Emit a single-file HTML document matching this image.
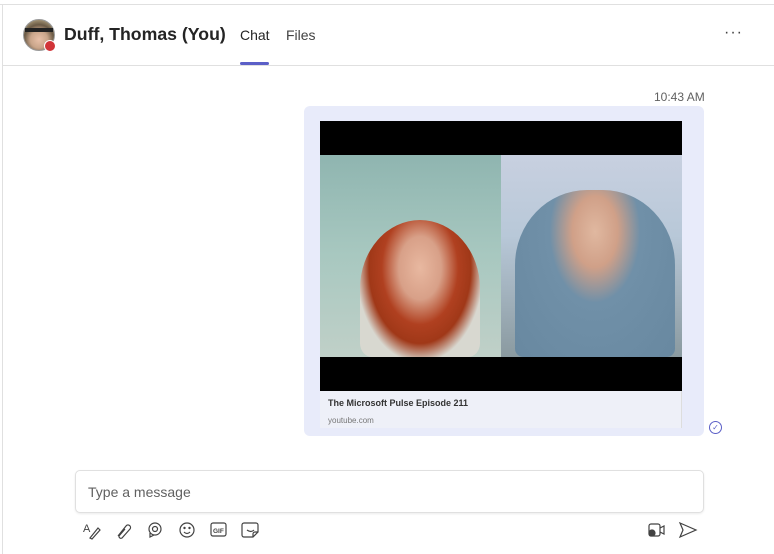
<!DOCTYPE html>
<html><head><style>
*{margin:0;padding:0;box-sizing:border-box}
body{width:774px;height:554px;overflow:hidden;background:#fff;font-family:"Liberation Sans",sans-serif;position:relative}
.abs{position:absolute}
</style></head><body>
<div class="abs" style="left:0;top:4px;width:774px;height:1px;background:#e0e0e0"></div>
<div class="abs" style="left:2px;top:4px;width:1px;height:550px;background:#e0e0e0"></div>
<div class="abs" style="left:3px;top:65px;width:771px;height:1px;background:#e0e0e0"></div>
<!-- avatar -->
<div class="abs" style="left:23px;top:19px;width:32px;height:32px;border-radius:50%;background:radial-gradient(circle at 50% 65%,#e8c0a8 0,#c9a58a 35%,#6a5a45 60%,#d9c9a0 100%);border:1px solid #999"></div>
<div class="abs" style="left:25px;top:28px;width:28px;height:4px;background:#222"></div>
<div class="abs" style="left:44px;top:40px;width:12px;height:12px;border-radius:50%;background:#d13438;border:1.5px solid #fff"></div>
<div class="abs" style="left:64px;top:24px;font-size:17.7px;font-weight:bold;color:#242424">Duff, Thomas (You)</div>
<div class="abs" style="left:240px;top:27px;font-size:14px;color:#242424">Chat</div>
<div class="abs" style="left:240px;top:62px;width:29px;height:3px;background:#5b5fc7;border-radius:2px"></div>
<div class="abs" style="left:286px;top:27px;font-size:14px;color:#424242">Files</div>
<div class="abs" style="left:724px;top:24px;font-size:16px;color:#424242;letter-spacing:1px">···</div>
<div class="abs" style="left:654px;top:90px;font-size:12px;color:#616161">10:43 AM</div>
<!-- card -->
<div class="abs" style="left:304px;top:106px;width:400px;height:330px;background:#e8ebfa;border-radius:6px"></div>
<div class="abs" style="left:320px;top:121px;width:362px;height:270px;background:#000"></div>
<div class="abs" style="left:320px;top:155px;width:181px;height:202px;background:linear-gradient(180deg,#8fb5b0,#a8c8c0 50%,#c0d0c8)"></div>
<div class="abs" style="left:360px;top:220px;width:120px;height:137px;border-radius:50% 50% 10% 10%;background:radial-gradient(ellipse at 50% 35%,#e8b8a0 0,#d8a088 25%,#b04020 45%,#a03818 60%,#d8d8d0 75%)"></div>
<div class="abs" style="left:501px;top:155px;width:181px;height:202px;background:linear-gradient(180deg,#c8d0e0,#b8c8d8 40%,#8a9aa0)"></div>
<div class="abs" style="left:515px;top:190px;width:160px;height:167px;border-radius:45% 45% 5% 5%;background:radial-gradient(ellipse at 50% 25%,#e0b8a0 0,#d0a088 20%,#7090a8 40%,#6888a0 100%)"></div>
<div class="abs" style="left:320px;top:391px;width:362px;height:37px;background:#eef0f8;border-right:1px solid #ddd"></div>
<div class="abs" style="left:328px;top:398px;font-size:9px;font-weight:bold;color:#333">The Microsoft Pulse Episode 211</div>
<div class="abs" style="left:328px;top:416px;font-size:8px;color:#777">youtube.com</div>
<div class="abs" style="left:709px;top:421px;width:13px;height:13px;border-radius:50%;border:1px solid #5b5fc7;color:#5b5fc7;font-size:8px;text-align:center;line-height:11px">✓</div>
<!-- input -->
<div class="abs" style="left:75px;top:470px;width:629px;height:43px;border:1px solid #e0e0e0;border-radius:5px;background:#fff;box-shadow:0 1px 2px rgba(0,0,0,.08)"></div>
<div class="abs" style="left:88px;top:484px;font-size:14px;color:#616161">Type a message</div>
<svg class="abs" style="left:80px;top:518px" width="640" height="24" fill="none" stroke="#424242" stroke-width="1.2">
<text x="3" y="14" font-size="11" fill="#424242" stroke="none" font-family="Liberation Sans">A</text>
<path d="M10 20 L18 10 L20 12 L12 21 Z"/>
<path d="M38 18 L46 8 a2.5 2.5 0 0 1 4 3 L42 20 a2 2 0 0 1 -3 -2 L45 11"/>
<circle cx="75" cy="11" r="6"/><path d="M70 15 L70 19 L74 17"/><circle cx="75" cy="11" r="2.5"/>
<circle cx="107" cy="12" r="7"/><circle cx="104.5" cy="10" r=".6" fill="#424242"/><circle cx="109.5" cy="10" r=".6" fill="#424242"/><path d="M104 14 q3 3 6 0"/>
<rect x="131" y="5" width="15" height="13" rx="2"/><text x="133" y="15" font-size="6.5" fill="#424242" stroke="none" font-weight="bold">GIF</text>
<path d="M164 5 h12 a2 2 0 0 1 2 2 v7 l-5 5 h-9 a2 2 0 0 1 -2 -2 v-10 a2 2 0 0 1 2 -2z M173 19 v-3 a2 2 0 0 1 2 -2 h3"/><path d="M167 12 q4 3 7 0"/>
<rect x="569" y="6" width="11" height="12" rx="2"/><path d="M580 10 l4 -2 v8 l-4 -2"/><circle cx="572" cy="15" r="3" fill="#424242"/>
<path d="M600 5 L616 12 L600 19 L603 12 Z"/>
</svg>
</body></html>
